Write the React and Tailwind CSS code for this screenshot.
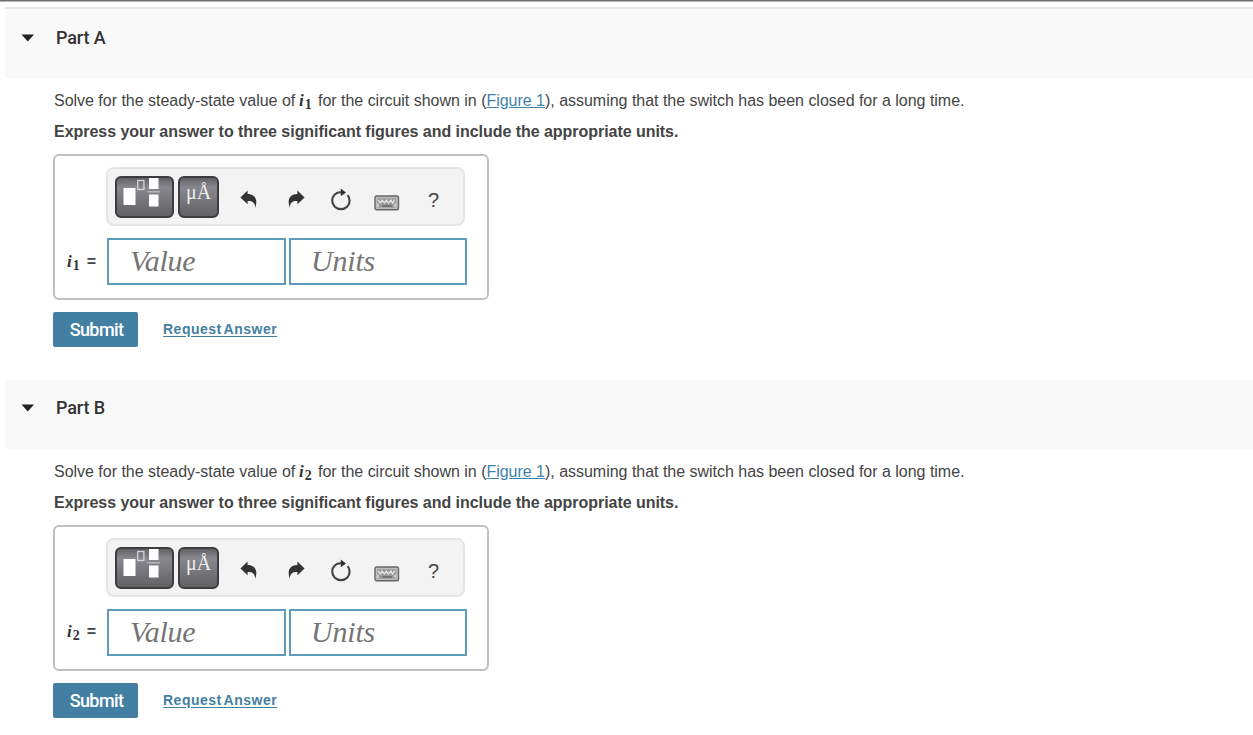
import React from "react";

const parts = [
  { id: "A", sub: "1" },
  { id: "B", sub: "2" },
];

const TemplateIcon = () => (
  <svg className="w-full h-full" viewBox="0 0 60 42">
    <rect x="8.5" y="12" width="12" height="17" fill="#fff" />
    <rect x="22.7" y="4.5" width="6.2" height="9" fill="none" stroke="#d4d4d8" strokeWidth="1.3" />
    <rect x="34" y="2" width="9.5" height="11" fill="#fff" />
    <path d="M32.5 15.8H45" stroke="#c4c4ca" strokeWidth="1.2" />
    <rect x="34" y="18.5" width="9.5" height="12" fill="#fff" />
  </svg>
);

const UndoIcon = () => (
  <svg className="w-[18px] h-[19px]" viewBox="0 0 18 19">
    <path d="M0.4 7.4L7.6 0.6V4C14.5 4.1 18.4 8.8 15.2 18C15.2 12.6 12.4 10.8 7.6 10.9V14.2Z" fill="#333" />
  </svg>
);

const ResetIcon = () => (
  <svg className="w-[22px] h-[24px]" viewBox="0 0 22 24">
    <path d="M11.4 4.3C6 3.8 2.2 7.8 2.2 12.5C2.2 17.5 6.2 21.2 11 21.2C15.8 21.2 19.6 17.5 19.6 12.7C19.6 10.3 18.9 8.6 17.6 7.1" fill="none" stroke="#444" strokeWidth="2.2" />
    <path d="M10.8 0.4L16 4.4L10.8 8.2Z" fill="#333" />
  </svg>
);

const KeyboardIcon = () => (
  <svg className="w-[26px] h-[16px]" viewBox="0 0 26 16">
    <rect x="1" y="1" width="23.5" height="13.8" rx="1.5" fill="#bdbdbd" stroke="#666" strokeWidth="1.4" />
    <rect x="3.2" y="3.2" width="19" height="9.4" fill="#999" />
    <path d="M4 5L6.5 8L8 5L10.5 8L12.5 5L14.5 8L17 5L18.5 8L21 4.5" fill="none" stroke="#e8e8e8" strokeWidth="1.2" />
    <path d="M4 8.5V12M21 8.5V12" stroke="#e0e0e0" strokeWidth="1.3" />
    <path d="M8.5 11H18" stroke="#666" strokeWidth="1.5" />
  </svg>
);

const Variable = ({ sub }) => (
  <span className="font-['Liberation_Serif'] whitespace-nowrap text-[#333]">
    <b className="italic text-[17px]">i</b>
    <span className="relative top-[3px] ml-[1px] text-[14px] font-bold">{sub}</span>
  </span>
);

const Toolbar = () => (
  <div className="ml-[51px] w-[359px] h-[59px] flex items-start rounded-lg border-2 border-[#e5e5e5] bg-[#f3f3f3] pl-[7px] pt-[7px]">
    <button className="w-[59px] h-[42px] rounded-md border-2 border-[#3d3d3f] bg-linear-to-b from-[#626266] via-[#88888f] via-25% to-[#626264]">
      <div className="-m-[2px] w-[60px] h-[42px]">
        <TemplateIcon />
      </div>
    </button>
    <button className="ml-[4px] w-[41px] h-[42px] flex justify-center rounded-md border-2 border-[#3d3d3f] bg-linear-to-b from-[#626266] via-[#88888f] via-25% to-[#626264] font-['Liberation_Serif'] text-[20px] leading-[29px] text-[#eee]">
      μÅ
    </button>
    <div className="ml-[21px] mt-[14px]">
      <UndoIcon />
    </div>
    <div className="ml-[29px] mt-[14px] -scale-x-100">
      <UndoIcon />
    </div>
    <div className="ml-[25px] mt-[12px]">
      <ResetIcon />
    </div>
    <div className="ml-[22px] mt-[19px]">
      <KeyboardIcon />
    </div>
    <span className="ml-[28px] mt-[11px] font-['Liberation_Sans'] text-[20px] leading-[26px] text-[#444]">?</span>
  </div>
);

const Part = ({ id, sub }) => (
  <section className="h-[370.5px]">

    {/* header */}
    <div className="ml-[5px] h-[69px] flex items-start bg-[#f9f9f9] pl-[16px] pt-[16.5px]">
      <svg className="mt-[8px] w-[14px] h-[8px]" viewBox="0 0 14 8">
        <path d="M0.5 0.5H13L6.8 7.6Z" fill="#222" />
      </svg>
      <h2 className="ml-[21px] font-['Roboto'] text-[18px] leading-[24px] font-medium tracking-[-0.15px] text-[#333]">Part {id}</h2>
    </div>

    {/* question */}
    <div className="ml-[54px] pt-[10px] font-['Liberation_Sans'] text-[16px] text-[#444]">
      <p className="flex h-[26px] whitespace-nowrap leading-[26px] tracking-[-0.02px]">
        <span className="w-[245px]">Solve for the steady-state value of</span>
        <span className="w-[19px]"><Variable sub={sub} /></span>
        <span>
          for the circuit shown in (<a href="#figure" className="text-[#3f82a7] underline">Figure 1</a>), assuming that the switch has been closed for a long time.
        </span>
      </p>
      <p className="mt-[6px] whitespace-nowrap text-[16px] leading-[24px] font-bold tracking-[-0.04px]">
        Express your answer to three significant figures and include the appropriate units.
      </p>
    </div>

    {/* answer box */}
    <div className="ml-[53px] mt-[10px] w-[436px] h-[146px] rounded-md border-2 border-[#bfbfbf] pt-[11px]">
      <Toolbar />
      <div className="mt-[12px] flex">
        <div className="w-[52px] flex items-center pl-[12px]">
          <Variable sub={sub} />
          <span className="ml-[7px] font-['Liberation_Sans'] text-[16px] font-bold text-[#444]">=</span>
        </div>
        <div className="w-[179px] h-[47px] border-2 border-[#5f9bba] pl-[21px] font-['Liberation_Serif'] text-[30px] leading-[42px] italic tracking-[-0.3px] text-[#757575]">
          Value
        </div>
        <div className="ml-[3px] w-[178px] h-[47px] border-2 border-[#5f9bba] pl-[20px] font-['Liberation_Serif'] text-[30px] leading-[42px] italic tracking-[-0.2px] text-[#757575]">
          Units
        </div>
      </div>
    </div>

    {/* actions */}
    <div className="ml-[53px] mt-[12px] flex items-center">
      <button className="w-[85px] h-[35px] rounded-[2px] bg-[#437fa2] pl-[2px] font-['Roboto'] text-[18px] font-medium tracking-[-0.6px] text-white">Submit</button>
      <a href="#answer" className="ml-[25px] whitespace-nowrap font-['Liberation_Sans'] text-[14px] font-bold tracking-[0.5px] [word-spacing:-2px] text-[#437fa2] underline underline-offset-2">Request Answer</a>
    </div>

  </section>
);

const App = () => {
  return (
    <div className="h-[735px] overflow-hidden bg-white">
      <div className="h-[2px] border-t border-t-[#6e6e6e] bg-[#b5b5b5]" />
      <div className="ml-[5px] mt-[5px] h-[2px] bg-[#e7e7e7]" />
      {parts.map((part) => (
        <Part key={part.id} id={part.id} sub={part.sub} />
      ))}
    </div>
  );
};

export default App;
